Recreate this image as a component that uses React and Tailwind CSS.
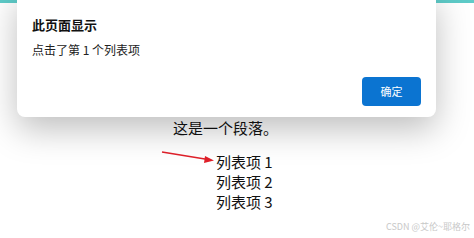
export default function App() {
  return (
    <div
      className="relative w-[474px] h-[238px] overflow-hidden bg-white"
      style={{ fontFamily: '"Noto Sans CJK SC", "Noto Sans", sans-serif' }}
    >
      {/* page behind the dialog */}
      <div className="h-[3px] bg-[#5ecbc8]" />
      <p className="pl-[173px] pt-[115px] text-[15px] leading-[20px] text-[#111]">这是一个段落。</p>
      <ul className="pl-[216px] pt-[14px] text-[15px] leading-[20px] text-[#111]">
        <li>列表项 1</li>
        <li>列表项 2</li>
        <li>列表项 3</li>
      </ul>

      {/* annotation arrow */}
      <svg className="absolute left-[158px] top-[148px]" width="60" height="18" viewBox="0 0 60 18">
        <line x1="4" y1="4" x2="50" y2="11.5" stroke="#e0202a" strokeWidth="1.6" />
        <polygon points="56,12.5 47,8 46,15" fill="#e0202a" />
      </svg>

      <div className="absolute right-[4px] bottom-[6px] text-[9px] leading-[10px] text-[#c8c8c8]">
        CSDN @艾伦~耶格尔
      </div>

      {/* alert dialog */}
      <div className="absolute left-[17px] top-[-10px] w-[419px] h-[127px] rounded-[8px] bg-white shadow-[0_12px_34px_rgba(0,0,0,0.26)] flex flex-col">
        <div className="pl-[15px] pt-[26px] text-[13px] leading-[18px] font-bold text-[#111]">此页面显示</div>
        <div className="pl-[15px] pt-[8px] text-[12px] leading-[16px] text-[#222]">点击了第 1 个列表项</div>
        <div className="flex justify-end pr-[15px] pt-[19px]">
          <button className="w-[59px] h-[29px] rounded-[4px] bg-[#0b74d1] text-white text-[11px]">确定</button>
        </div>
      </div>
    </div>
  );
}
